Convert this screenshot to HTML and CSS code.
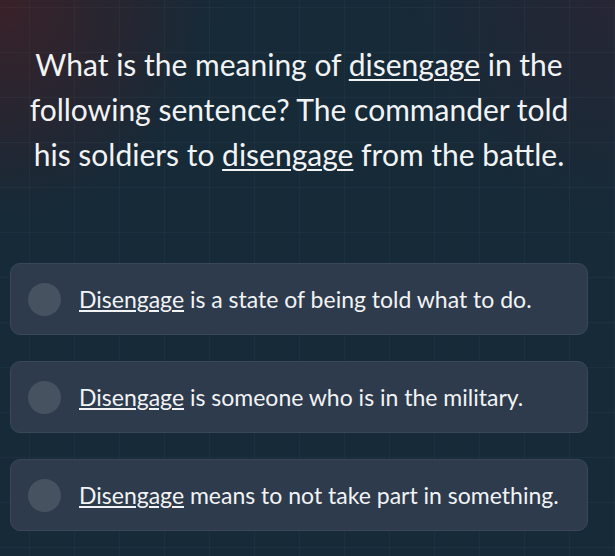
FILE: index.html
```html
<!DOCTYPE html>
<html lang="en">
<head>
<meta charset="utf-8">
<title>Question</title>
<link rel="stylesheet" href="styles.css">
</head>
<body>
<main class="page">
  <h1 class="question">What is the meaning of <u class="term">disengage</u> in the following sentence? The commander told his soldiers to <u class="term">disengage</u> from the battle.</h1>
  <div class="options">
    <button class="option"><span class="radio"></span><span class="label"><u class="term">Disengage</u> is a state of being told what to do.</span></button>
    <button class="option"><span class="radio"></span><span class="label"><u class="term">Disengage</u> is someone who is in the military.</span></button>
    <button class="option"><span class="radio"></span><span class="label"><u class="term">Disengage</u> means to not take part in something.</span></button>
  </div>
</main>
</body>
</html>
```
FILE: styles.css
```css
html, body {
  margin: 0;
  padding: 0;
  height: 100%;
}
body {
  font-family: Lato, "Open Sans", sans-serif;
  color: #f2f3f4;
  background-color: #162a38;
  background-image:
    linear-gradient(to right, rgba(120, 150, 170, 0.06) 1px, transparent 1px),
    linear-gradient(to bottom, rgba(120, 150, 170, 0.06) 1px, transparent 1px),
    radial-gradient(circle at 0 0, rgba(70, 30, 35, 0.75), rgba(70, 30, 35, 0) 220px),
    radial-gradient(circle at 100% 0, rgba(50, 35, 50, 0.6), rgba(50, 35, 50, 0) 220px);
  background-size: 45px 45px, 45px 45px, 100% 100%, 100% 100%;
  background-position: 29px 7px, 29px 7px, 0 0, 0 0;
  overflow: hidden;
}
.page {
  width: 598px;
  display: flex;
  flex-direction: column;
}
.question {
  margin: 0;
  padding: 42px 10px 0;
  font-size: 30px;
  font-weight: 400;
  line-height: 45px;
  text-align: center;
}
.term {
  text-decoration: underline;
  text-decoration-thickness: 2px;
  text-underline-offset: 3px;
}
.options {
  display: flex;
  flex-direction: column;
  gap: 26px;
  padding: 86px 10px 0;
}
.option {
  display: flex;
  align-items: center;
  gap: 18px;
  height: 72px;
  padding: 0 0 0 17px;
  background: #2d3b4d;
  border: 1px solid #3a4759;
  border-radius: 10px;
  font: inherit;
  color: inherit;
  text-align: left;
  cursor: pointer;
}
.radio {
  flex: none;
  width: 33px;
  height: 33px;
  border-radius: 50%;
  background: #46525f;
}
.label {
  font-size: 23px;
}
.label .term {
  text-underline-offset: 2px;
}
```
